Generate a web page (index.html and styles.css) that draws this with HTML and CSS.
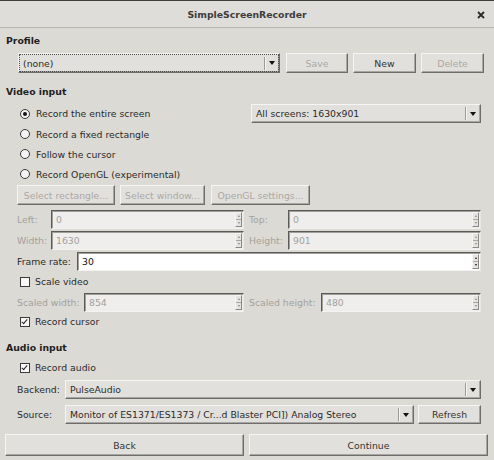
FILE: index.html
```html
<!DOCTYPE html>
<html>
<head>
<meta charset="utf-8">
<link rel="stylesheet" href="styles.css">
</head>
<body>
<div class="win">
  <div class="titlebar">
    <span class="title">SimpleScreenRecorder</span>
    <svg class="close" width="8" height="8" viewBox="0 0 8 8"><path d="M1 1 L7 7 M7 1 L1 7" stroke="#2a2a2a" stroke-width="1.8"/></svg>
  </div>

  <div class="section-title mt-7">Profile</div>
  <div class="row profile-row mt-6">
    <div class="combo focus w-profile"><span class="combo-text">(none)</span><span class="combo-arrow"><i></i></span></div>
    <div class="btn disabled w-save">Save</div>
    <div class="btn w-new">New</div>
    <div class="btn disabled w-delete">Delete</div>
  </div>

  <div class="section-title mt-13">Video input</div>
  <div class="row pad between h19 mt-6">
    <div class="choice"><span class="radio on"></span>Record the entire screen</div>
    <div class="combo w-screens"><span class="combo-text">All screens: 1630x901</span><span class="combo-arrow"><i></i></span></div>
  </div>
  <div class="row pad h20 mt-1"><div class="choice"><span class="radio"></span>Record a fixed rectangle</div></div>
  <div class="row pad h20"><div class="choice"><span class="radio"></span>Follow the cursor</div></div>
  <div class="row pad h20"><div class="choice"><span class="radio"></span>Record OpenGL (experimental)</div></div>
  <div class="row pad mt-1 btn-row">
    <div class="btn disabled w-selrect">Select rectangle...</div>
    <div class="btn disabled w-selwin">Select window...</div>
    <div class="btn disabled w-gl">OpenGL settings...</div>
  </div>

  <div class="row pad grid-rect mt-5">
    <span class="label disabled-text">Left:</span>
    <div class="spin disabled"><span class="spin-text">0</span><span class="spin-arrows"><i class="up"></i><i class="down"></i></span></div>
    <span class="label disabled-text">Top:</span>
    <div class="spin disabled"><span class="spin-text">0</span><span class="spin-arrows"><i class="up"></i><i class="down"></i></span></div>
  </div>
  <div class="row pad grid-rect mt-2">
    <span class="label disabled-text">Width:</span>
    <div class="spin disabled"><span class="spin-text">1630</span><span class="spin-arrows"><i class="up"></i><i class="down"></i></span></div>
    <span class="label disabled-text">Height:</span>
    <div class="spin disabled"><span class="spin-text">901</span><span class="spin-arrows"><i class="up"></i><i class="down"></i></span></div>
  </div>
  <div class="row pad grid-rate mt-2">
    <span class="label">Frame rate:</span>
    <div class="spin white"><span class="spin-text">30</span><span class="spin-arrows"><i class="up dark"></i><i class="down dark"></i></span></div>
  </div>
  <div class="row pad h19 mt-1"><div class="choice"><span class="check"></span>Scale video</div></div>
  <div class="row pad grid-scaled mt-2">
    <span class="label disabled-text">Scaled width:</span>
    <div class="spin disabled"><span class="spin-text">854</span><span class="spin-arrows"><i class="up"></i><i class="down"></i></span></div>
    <span class="label disabled-text">Scaled height:</span>
    <div class="spin disabled"><span class="spin-text">480</span><span class="spin-arrows"><i class="up"></i><i class="down"></i></span></div>
  </div>
  <div class="row pad h19"><div class="choice"><span class="check on"></span>Record cursor</div></div>

  <div class="section-title mt-11">Audio input</div>
  <div class="row pad h19 mt-4"><div class="choice"><span class="check on"></span>Record audio</div></div>
  <div class="row pad grid-backend mt-3">
    <span class="label">Backend:</span>
    <div class="combo"><span class="combo-text">PulseAudio</span><span class="combo-arrow"><i></i></span></div>
  </div>
  <div class="row pad grid-source mt-6">
    <span class="label">Source:</span>
    <div class="combo"><span class="combo-text">Monitor of ES1371/ES1373 / Cr...d Blaster PCI]) Analog Stereo</span><span class="combo-arrow"><i></i></span></div>
    <div class="btn">Refresh</div>
  </div>

  <div class="row bottom-row mt-10">
    <div class="btn big">Back</div>
    <div class="btn big">Continue</div>
  </div>
</div>
</body>
</html>
```

FILE: styles.css
```css
html, body {
  margin: 0;
  padding: 0;
  background: #dcdad5;
}

.win {
  width: 494px;
  height: 460px;
  box-sizing: border-box;
  background: #dcdad5;
  font-family: "DejaVu Sans", sans-serif;
  font-size: 9.3px;
  color: #2a2a2a;
  border-top: 1px solid #3e3e3e;
  overflow: hidden;
}

.titlebar {
  height: 26px;
  border-bottom: 1px solid #b9b6b1;
  background: #dfddd9;
  display: flex;
  align-items: center;
  justify-content: center;
  position: relative;
}

.title {
  font-weight: bold;
  color: #3c3c3c;
}

.close {
  position: absolute;
  right: 9px;
  top: 10px;
}

.section-title {
  font-weight: bold;
  height: 12px;
  line-height: 12px;
  padding-left: 6px;
  color: #1f1f1f;
}

.row {
  display: flex;
  align-items: center;
}

.pad {
  padding: 0 13px 0 17px;
}

.between { justify-content: space-between; }
.h19 { height: 19px; }
.h20 { height: 20px; }

.mt-1 { margin-top: 1px; }
.mt-2 { margin-top: 2px; }
.mt-3 { margin-top: 3px; }
.mt-4 { margin-top: 4px; }
.mt-5 { margin-top: 5px; }
.mt-6 { margin-top: 6px; }
.mt-7 { margin-top: 7px; }
.mt-10 { margin-top: 10px; }
.mt-11 { margin-top: 11px; }
.mt-13 { margin-top: 13px; }

/* buttons */
.btn {
  box-sizing: border-box;
  height: 20px;
  display: flex;
  align-items: center;
  justify-content: center;
  background: #e2e0dc;
  border: 1px solid;
  border-color: #f6f5f3 #6f6d6a #6f6d6a #f6f5f3;
  box-shadow: inset -1px -1px 0 #a8a6a2;
  color: #333333;
  font-weight: normal;
  white-space: nowrap;
}

.btn.disabled { color: #aaa8a4; }

.profile-row {
  height: 20px;
  padding-left: 18px;
  gap: 5px;
}
.w-profile { width: 262px; margin-right: 1px; }
.w-save { width: 62px; }
.w-new { width: 63px; }
.w-delete { width: 63px; }

.btn-row {
  height: 20px;
  gap: 5px;
}
.w-selrect { width: 98px; }
.w-selwin { width: 85px; }
.w-gl { width: 99px; margin-left: 1px; }

.bottom-row {
  padding-left: 5px;
  gap: 5px;
}
.btn.big {
  width: 239px;
  height: 22px;
}

/* combo boxes */
.combo {
  box-sizing: border-box;
  height: 19px;
  display: flex;
  align-items: center;
  background: #e2e0dc;
  border: 1px solid;
  border-color: #f6f5f3 #6f6d6a #6f6d6a #f6f5f3;
  box-shadow: inset -1px -1px 0 #a8a6a2;
  min-width: 0;
}
.combo.focus {
  height: 20px;
  outline: 1px dotted #4a4a4a;
  outline-offset: -2px;
}
.combo-text {
  flex: 1;
  padding-left: 4px;
  white-space: nowrap;
  overflow: hidden;
}
.combo-arrow {
  width: 13px;
  height: 13px;
  border-left: 1px solid #9c9a96;
  box-shadow: inset 1px 0 0 #f6f5f3;
  display: flex;
  align-items: center;
  justify-content: center;
  margin-right: 1px;
}
.combo-arrow i {
  width: 0;
  height: 0;
  border-left: 3px solid transparent;
  border-right: 3px solid transparent;
  border-top: 4px solid #111;
}
.w-screens { width: 230px; }

/* radio + check */
.choice {
  display: flex;
  align-items: center;
  white-space: nowrap;
  padding-left: 3px;
}
.radio {
  box-sizing: border-box;
  width: 10px;
  height: 10px;
  border-radius: 50%;
  border: 1px solid #3a3a3a;
  background: #f4f4f4;
  margin-right: 6px;
  display: flex;
  align-items: center;
  justify-content: center;
}
.radio.on::after {
  content: "";
  width: 4px;
  height: 4px;
  border-radius: 50%;
  background: #111;
}
.check {
  box-sizing: border-box;
  width: 10px;
  height: 10px;
  border: 1px solid #3a3a3a;
  background: #f8f8f8;
  margin-right: 5px;
  position: relative;
}
.check.on::after {
  content: "";
  position: absolute;
  left: 2px;
  top: 0px;
  width: 2px;
  height: 5px;
  border-right: 1px solid #222;
  border-bottom: 1px solid #222;
  transform: rotate(40deg);
}

/* labels and spin boxes */
.label {
  white-space: nowrap;
}
.disabled-text { color: #a3a19d; }

.grid-rect {
  display: grid;
  grid-template-columns: 34px 193px 44px 193px;
  height: 19px;
}
.grid-rate {
  display: grid;
  grid-template-columns: 60px 404px;
  height: 19px;
}
.grid-scaled {
  display: grid;
  grid-template-columns: 67px 160px 77px 160px;
  height: 19px;
}
.grid-scaled .label:nth-of-type(2),
.grid-rect .label:nth-of-type(2) {
  padding-left: 5px;
}

.grid-backend {
  display: grid;
  grid-template-columns: 48px 416px;
  height: 19px;
}
.grid-source {
  display: grid;
  grid-template-columns: 44px 349px 63px;
  column-gap: 4px;
  height: 19px;
}
.grid-source .btn { height: 19px; }

.spin {
  box-sizing: border-box;
  height: 19px;
  display: flex;
  align-items: center;
  border: 1px solid;
  border-color: #5c5a57 #e8e7e5 #f4f3f1 #5c5a57;
  box-shadow: inset 1px 1px 0 #a19f9b;
  background: #efeeec;
}
.spin.disabled { color: #a3a19d; }
.spin.white {
  background: #ffffff;
  color: #111;
}
.spin-text {
  flex: 1;
  padding-left: 4px;
}
.spin-arrows {
  width: 7px;
  height: 15px;
  margin-right: 1px;
  display: flex;
  flex-direction: column;
  border: 1px solid;
  border-color: #f6f5f3 #8a8884 #8a8884 #f6f5f3;
  background: #e6e4e0;
  box-sizing: border-box;
}
.spin-arrows i {
  flex: 1;
  display: flex;
  align-items: center;
  justify-content: center;
}
.spin-arrows i.up { border-bottom: 1px solid #a8a6a2; }
.spin-arrows i.up::after {
  content: "";
  border-left: 1.5px solid transparent;
  border-right: 1.5px solid transparent;
  border-bottom: 2px solid #8a8884;
}
.spin-arrows i.down::after {
  content: "";
  border-left: 1.5px solid transparent;
  border-right: 1.5px solid transparent;
  border-top: 2px solid #8a8884;
}
.spin-arrows i.dark.up::after { border-bottom-color: #111; }
.spin-arrows i.dark.down::after { border-top-color: #111; }
```
